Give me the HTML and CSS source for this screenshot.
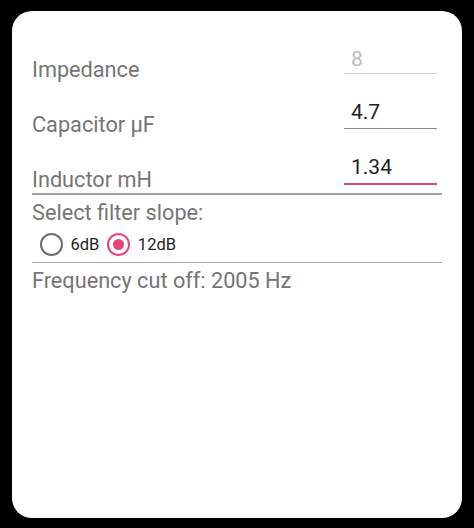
FILE: index.html
```html
<!DOCTYPE html>
<html lang="en">
<head>
<meta charset="utf-8">
<title>Crossover filter</title>
<link rel="stylesheet" href="styles.css">
</head>
<body>
  <main class="card">
    <div class="row">
      <label class="label" for="impedance">Impedance</label>
      <input class="field field--disabled" id="impedance" type="text" placeholder="8" disabled>
    </div>
    <div class="row">
      <label class="label" for="capacitor">Capacitor μF</label>
      <input class="field" id="capacitor" type="text" value="4.7">
    </div>
    <div class="row">
      <label class="label" for="inductor">Inductor mH</label>
      <input class="field field--focused" id="inductor" type="text" value="1.34">
    </div>
    <hr class="divider divider--strong">
    <p class="label heading">Select filter slope:</p>
    <div class="radios">
      <label class="radio">
        <input type="radio" name="slope" value="6">
        <span class="radio__ring"></span>
        <span class="radio__text">6dB</span>
      </label>
      <label class="radio">
        <input type="radio" name="slope" value="12" checked>
        <span class="radio__ring"></span>
        <span class="radio__text">12dB</span>
      </label>
    </div>
    <hr class="divider divider--light">
    <p class="label result">Frequency cut off: 2005 Hz</p>
  </main>
</body>
</html>
```

FILE: styles.css
```css
html, body {
  margin: 0;
  padding: 0;
  background: #000;
}

body {
  width: 474px;
  height: 528px;
  padding-top: 11px;
  box-sizing: border-box;
  font-family: Roboto, "Noto Sans", Arial, sans-serif;
}

.card {
  margin: 0 12px;
  height: 507px;
  box-sizing: border-box;
  background: #fff;
  border-radius: 20px;
  padding: 16.5px 20px 0 20px;
}

/* label on the left, underlined value field on the right */
.row {
  display: flex;
  justify-content: space-between;
  align-items: flex-end;
  height: 55px;
}

.label {
  margin: 0;
  font-size: 21.7px;
  line-height: 26px;
  color: #757575;
}

.field {
  width: 86px;
  height: 24px;
  margin: 0 5px 8.5px 0;
  padding: 0 0 4px 7px;
  box-sizing: content-box;
  border: none;
  border-bottom: 1px solid #8a8a8a;
  outline: none;
  background: transparent;
  font-family: inherit;
  font-size: 21px;
  color: #212121;
}

.field--disabled {
  border-bottom-color: #cfcfcf;
  padding-bottom: 2px;
}

.field--disabled::placeholder {
  color: #bdbdbd;
  opacity: 1;
}

.field--focused {
  border-bottom: 2px solid #e2457c;
  margin-bottom: 7.5px;
}

.divider {
  margin: 0;
  border: none;
}

.divider--strong {
  height: 2px;
  background: #9e9e9e;
}

.divider--light {
  height: 1px;
  background: #a8a8a8;
}

.heading {
  margin-top: 5px;
}

/* slope choice: custom radio rings */
.radios {
  display: flex;
  align-items: center;
  gap: 7.5px;
  height: 34px;
  margin-top: 2px;
  padding-left: 7.5px;
}

.radio {
  display: flex;
  align-items: center;
  gap: 8px;
}

.radio input {
  display: none;
}

.radio__ring {
  width: 23px;
  height: 23px;
  box-sizing: border-box;
  border: 2.5px solid #6b6b6b;
  border-radius: 50%;
  display: flex;
  align-items: center;
  justify-content: center;
}

.radio input:checked + .radio__ring {
  border-color: #e8457c;
}

.radio input:checked + .radio__ring::after {
  content: "";
  width: 11px;
  height: 11px;
  border-radius: 50%;
  background: #e8457c;
}

.radio__text {
  font-size: 16.5px;
  color: #1f1f1f;
}

.result {
  margin-top: 5px;
}
```
